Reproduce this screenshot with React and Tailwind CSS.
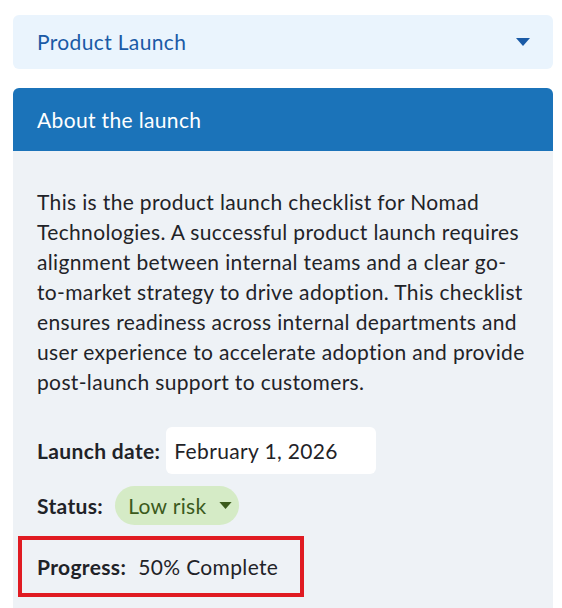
import React from 'react';

const Caret = ({ className }) => (
    <svg viewBox="0 0 14 8" className={className} fill="currentColor">
        <path d="M0 0 H14 L7 8 Z" />
    </svg>
);

const App = () => {
    return (
        <div className="min-h-screen bg-white pl-[13px] pr-[9px] pt-[15px] text-[#1f2328] tracking-[0.35px]" style={{ fontFamily: 'Lato, "Open Sans", sans-serif' }}>
            <div className="h-[54px] rounded-md bg-[#eaf4fd] flex items-center justify-between pl-6 pr-[23px]">
                <span className="text-[21px] text-[#1a5aa6]">Product Launch</span>
                <Caret className="w-[14px] h-[8px] text-[#1a5aa6]" />
            </div>

            <div className="mt-[19px] rounded-t-md overflow-hidden">
                <div className="h-[63px] bg-[#1b73b9] flex items-center px-6">
                    <h2 className="text-[21px] text-white">About the launch</h2>
                </div>
                <div className="bg-[#eef2f6] px-6 pt-[36px] pb-6">
                    <p className="text-[21px] leading-[30px]">
                        This is the product launch checklist for Nomad Technologies. A successful product launch requires alignment between internal teams and a clear go-to-market strategy to drive adoption. This checklist ensures readiness across internal departments and user experience to accelerate adoption and provide post-launch support to customers.
                    </p>

                    <div className="mt-[30px] flex items-center gap-[6px]">
                        <span className="text-[21px] font-bold">Launch date:</span>
                        <div className="w-[210px] h-[47px] bg-white rounded-md flex items-center px-2 text-[21px]">February 1, 2026</div>
                    </div>

                    <div className="mt-[12px] flex items-center gap-[12px]">
                        <span className="text-[21px] font-bold">Status:</span>
                        <div className="h-[39px] w-[124px] rounded-full bg-[#d5ebc6] text-[#3b5a1c] flex items-center gap-3 pl-[13px] text-[21px]">
                            Low risk
                            <Caret className="w-[13px] h-[7px] text-[#3b5a1c]" />
                        </div>
                    </div>

                    <div className="mt-[11px] -ml-[19px] w-[286px] h-[61px] border-4 border-[#e01b22] flex items-center pl-[15px] gap-[12px]">
                        <span className="text-[21px] font-bold">Progress:</span>
                        <span className="text-[21px]">50% Complete</span>
                    </div>
                </div>
            </div>
        </div>
    );
};

export default App;
